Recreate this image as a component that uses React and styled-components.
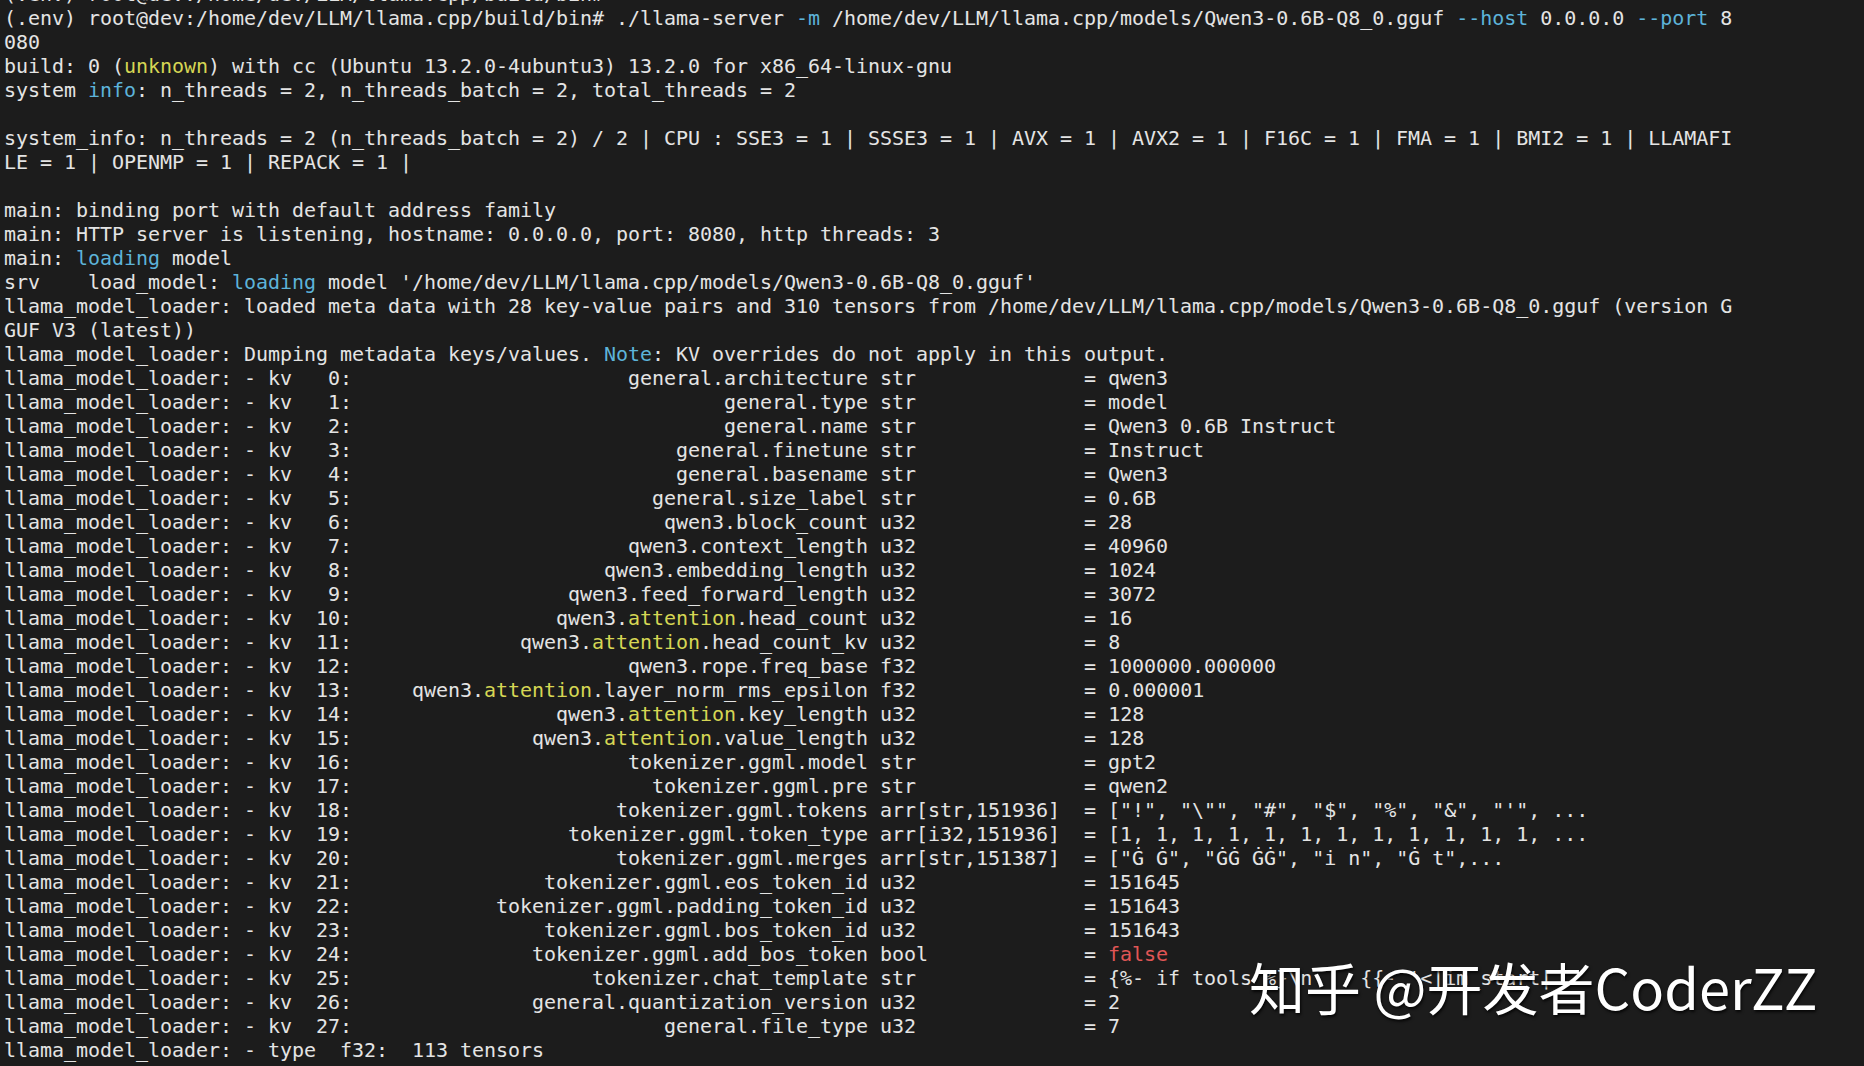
import styled, { createGlobalStyle } from 'styled-components';

const GlobalStyle = createGlobalStyle`
  html, body {
    margin: 0;
    padding: 0;
    background: #1c1c1c;
    overflow: hidden;
  }
`

const Screen = styled.div`
  position: relative;
  width: 1864px;
  height: 1066px;
  overflow: hidden;
  background: #1c1c1c;
`

const Terminal = styled.div`
  margin-top: -18px;
  padding-left: 4px;
  font-family: "DejaVu Sans Mono", "Liberation Mono", monospace;
  font-size: 20px;
  letter-spacing: -0.04px;
  line-height: 24px;
  color: #e4e4e4;
  white-space: pre;
`

const Line = styled.div`
  height: 24px;
`

const Hl = styled.span`
  color: ${p => p.tone === 'blue' ? '#5db3d9' : p.tone === 'yellow' ? '#d6d654' : p.tone === 'red' ? '#e05656' : 'inherit'};
`

const Watermark = styled.div`
  position: absolute;
  left: 1249px;
  top: 958px;
  font-family: "Noto Sans CJK SC", "Noto Sans", sans-serif;
  font-size: 56px;
  line-height: 1;
  color: #ffffff;
  white-space: pre;
  text-shadow: 1px 2px 3px rgba(0, 0, 0, 0.8);
`

const kvs = [
  ['general.architecture', 'str', 'qwen3'],
  ['general.type', 'str', 'model'],
  ['general.name', 'str', 'Qwen3 0.6B Instruct'],
  ['general.finetune', 'str', 'Instruct'],
  ['general.basename', 'str', 'Qwen3'],
  ['general.size_label', 'str', '0.6B'],
  ['qwen3.block_count', 'u32', '28'],
  ['qwen3.context_length', 'u32', '40960'],
  ['qwen3.embedding_length', 'u32', '1024'],
  ['qwen3.feed_forward_length', 'u32', '3072'],
  ['qwen3.attention.head_count', 'u32', '16'],
  ['qwen3.attention.head_count_kv', 'u32', '8'],
  ['qwen3.rope.freq_base', 'f32', '1000000.000000'],
  ['qwen3.attention.layer_norm_rms_epsilon', 'f32', '0.000001'],
  ['qwen3.attention.key_length', 'u32', '128'],
  ['qwen3.attention.value_length', 'u32', '128'],
  ['tokenizer.ggml.model', 'str', 'gpt2'],
  ['tokenizer.ggml.pre', 'str', 'qwen2'],
  ['tokenizer.ggml.tokens', 'arr[str,151936]', '["!", "\\"", "#", "$", "%", "&", "\'", ...'],
  ['tokenizer.ggml.token_type', 'arr[i32,151936]', '[1, 1, 1, 1, 1, 1, 1, 1, 1, 1, 1, 1, ...'],
  ['tokenizer.ggml.merges', 'arr[str,151387]', '["Ġ Ġ", "ĠĠ ĠĠ", "i n", "Ġ t",...'],
  ['tokenizer.ggml.eos_token_id', 'u32', '151645'],
  ['tokenizer.ggml.padding_token_id', 'u32', '151643'],
  ['tokenizer.ggml.bos_token_id', 'u32', '151643'],
  ['tokenizer.ggml.add_bos_token', 'bool', 'false'],
  ['tokenizer.chat_template', 'str', "{%- if tools %}\\n    {{- '<|im_start|..."],
  ['general.quantization_version', 'u32', '2'],
  ['general.file_type', 'u32', '7'],
]

const KvLine = ({ index, kvKey, type, value }) => {
  const head = `llama_model_loader: - kv ${String(index).padStart(3)}: `
  const padded = kvKey.padStart(42)
  const parts = padded.split('attention')
  return (
    <Line>
      {head}
      {parts.map((p, i) => (
        <span key={i}>{i > 0 && <Hl tone="yellow">attention</Hl>}{p}</span>
      ))}
      {' ' + type.padEnd(16) + ' = '}
      {value === 'false' ? <Hl tone="red">{value}</Hl> : value}
    </Line>
  )
}

export default function App() {
  return (
    <Screen>
      <GlobalStyle />
      <Terminal>
        <Line>(.env) root@dev:/home/dev/LLM/llama.cpp/build/bin#</Line>
        <Line>(.env) root@dev:/home/dev/LLM/llama.cpp/build/bin# ./llama-server <Hl tone="blue">-m</Hl> /home/dev/LLM/llama.cpp/models/Qwen3-0.6B-Q8_0.gguf <Hl tone="blue">--host</Hl> 0.0.0.0 <Hl tone="blue">--port</Hl> 8</Line>
        <Line>080</Line>
        <Line>build: 0 (<Hl tone="yellow">unknown</Hl>) with cc (Ubuntu 13.2.0-4ubuntu3) 13.2.0 for x86_64-linux-gnu</Line>
        <Line>system <Hl tone="blue">info</Hl>: n_threads = 2, n_threads_batch = 2, total_threads = 2</Line>
        <Line />
        <Line>system_info: n_threads = 2 (n_threads_batch = 2) / 2 | CPU : SSE3 = 1 | SSSE3 = 1 | AVX = 1 | AVX2 = 1 | F16C = 1 | FMA = 1 | BMI2 = 1 | LLAMAFI</Line>
        <Line>LE = 1 | OPENMP = 1 | REPACK = 1 |</Line>
        <Line />
        <Line>main: binding port with default address family</Line>
        <Line>main: HTTP server is listening, hostname: 0.0.0.0, port: 8080, http threads: 3</Line>
        <Line>main: <Hl tone="blue">loading</Hl> model</Line>
        <Line>srv    load_model: <Hl tone="blue">loading</Hl> model '/home/dev/LLM/llama.cpp/models/Qwen3-0.6B-Q8_0.gguf'</Line>
        <Line>llama_model_loader: loaded meta data with 28 key-value pairs and 310 tensors from /home/dev/LLM/llama.cpp/models/Qwen3-0.6B-Q8_0.gguf (version G</Line>
        <Line>GUF V3 (latest))</Line>
        <Line>llama_model_loader: Dumping metadata keys/values. <Hl tone="blue">Note</Hl>: KV overrides do not apply in this output.</Line>
        {kvs.map(([k, t, v], i) => (
          <KvLine key={i} index={i} kvKey={k} type={t} value={v} />
        ))}
        <Line>llama_model_loader: - type  f32:  113 tensors</Line>
      </Terminal>
      <Watermark>知乎 @开发者CoderZZ</Watermark>
    </Screen>
  )
}
